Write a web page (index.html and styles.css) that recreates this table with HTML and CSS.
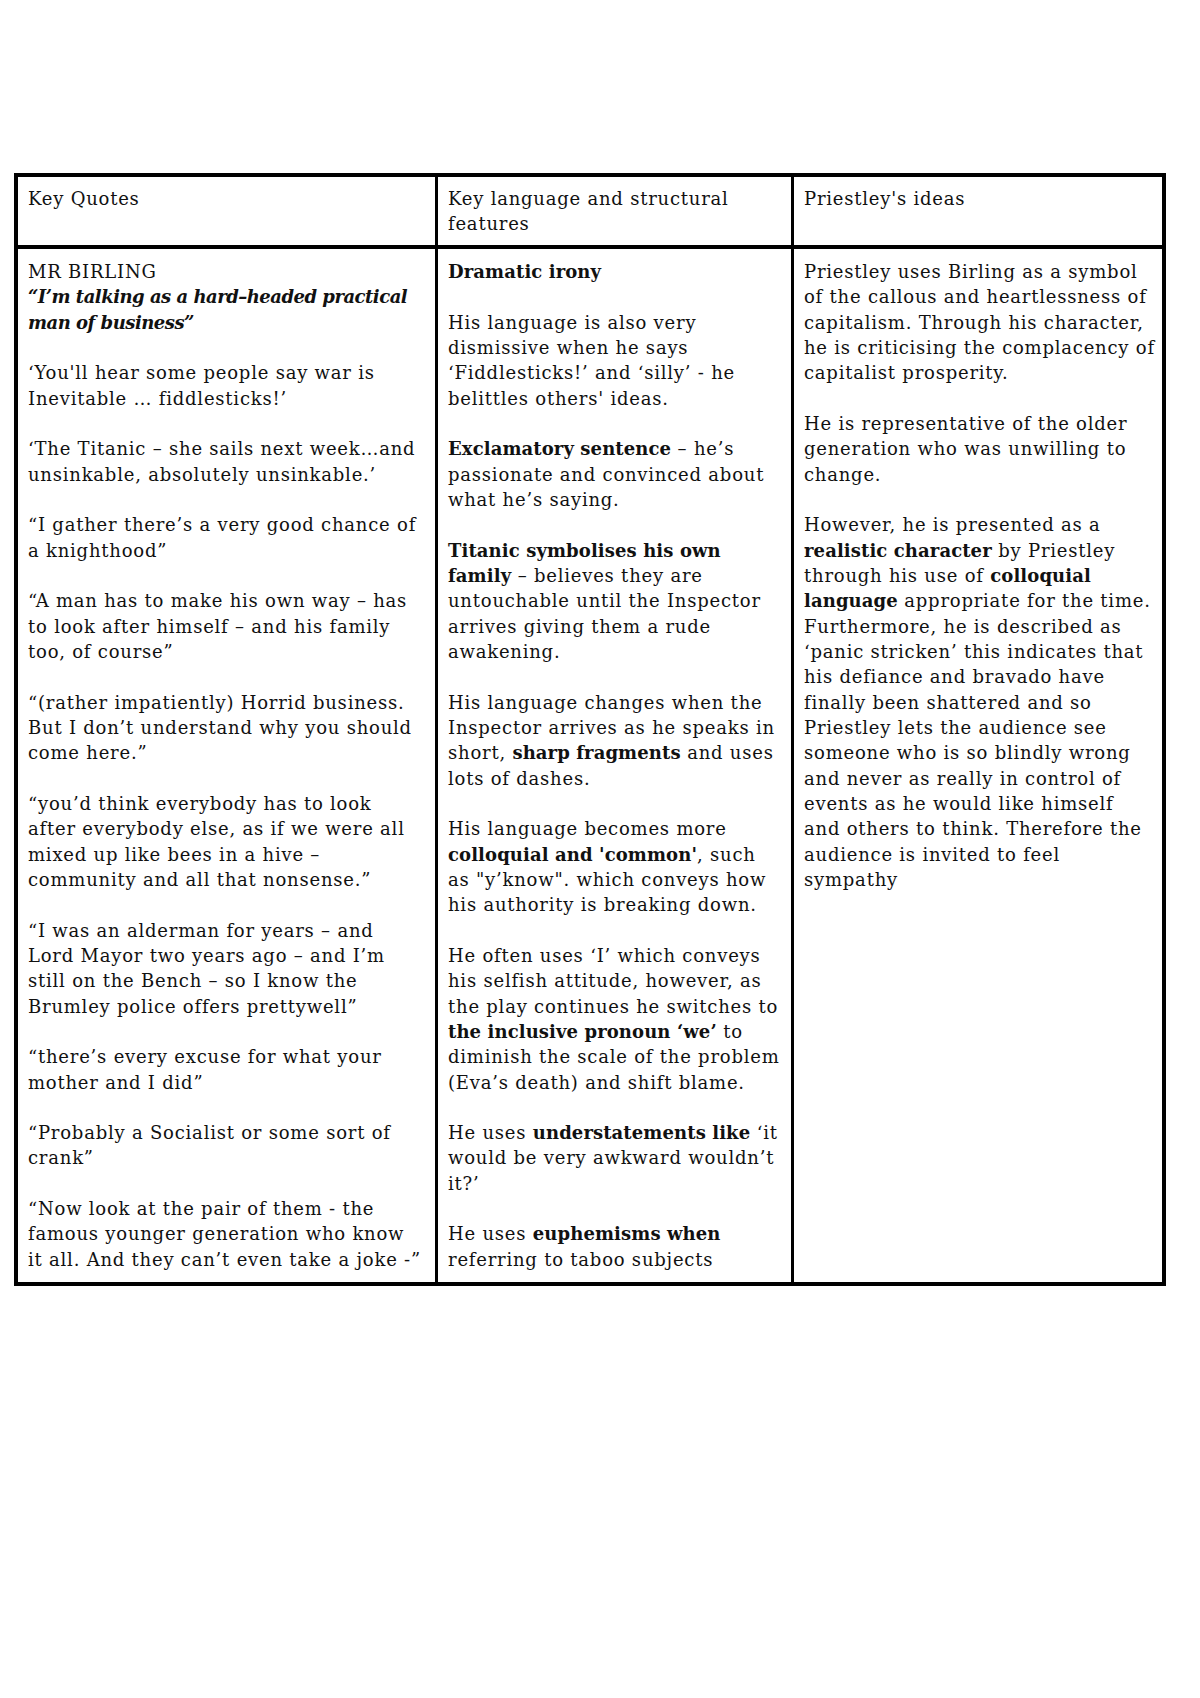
FILE: index.html
```html
<!DOCTYPE html>
<html lang="en">
<head>
<meta charset="utf-8">
<title>Mr Birling – Key Quotes</title>
<link rel="stylesheet" href="styles.css">
</head>
<body>
<table class="grid">
  <thead>
    <tr>
      <th class="c1">Key Quotes</th>
      <th class="c2">Key language and structural<br>features</th>
      <th class="c3">Priestley's ideas</th>
    </tr>
  </thead>
  <tbody>
    <tr>
      <td class="c1">
        <p>MR BIRLING<br><b class="bi"><i>“I’m talking as a hard–headed practical<br>man of business”</i></b></p>
        <p>‘You'll hear some people say war is<br>Inevitable … fiddlesticks!’</p>
        <p>‘The Titanic – she sails next week…and<br>unsinkable, absolutely unsinkable.’</p>
        <p>“I gather there’s a very good chance of<br>a knighthood”</p>
        <p>“A man has to make his own way – has<br>to look after himself – and his family<br>too, of course”</p>
        <p>“(rather impatiently) Horrid business.<br>But I don’t understand why you should<br>come here.”</p>
        <p>“you’d think everybody has to look<br>after everybody else, as if we were all<br>mixed up like bees in a hive –<br>community and all that nonsense.”</p>
        <p>“I was an alderman for years – and<br>Lord Mayor two years ago – and I’m<br>still on the Bench – so I know the<br>Brumley police offers prettywell”</p>
        <p>“there’s every excuse for what your<br>mother and I did”</p>
        <p>“Probably a Socialist or some sort of<br>crank”</p>
        <p>“Now look at the pair of them - the<br>famous younger generation who know<br>it all. And they can’t even take a joke -”</p>
      </td>
      <td class="c2">
        <p><b>Dramatic irony</b></p>
        <p>His language is also very<br>dismissive when he says<br>‘Fiddlesticks!’ and ‘silly’ - he<br>belittles others' ideas.</p>
        <p><b>Exclamatory sentence</b> – he’s<br>passionate and convinced about<br>what he’s saying.</p>
        <p><b>Titanic symbolises his own<br>family</b> – believes they are<br>untouchable until the Inspector<br>arrives giving them a rude<br>awakening.</p>
        <p>His language changes when the<br>Inspector arrives as he speaks in<br>short, <b>sharp fragments</b> and uses<br>lots of dashes.</p>
        <p>His language becomes more<br><b>colloquial and 'common'</b>, such<br>as "y’know". which conveys how<br>his authority is breaking down.</p>
        <p>He often uses ‘I’ which conveys<br>his selfish attitude, however, as<br>the play continues he switches to<br><b>the inclusive pronoun ‘we’</b> to<br>diminish the scale of the problem<br>(Eva’s death) and shift blame.</p>
        <p>He uses <b>understatements like</b> ‘it<br>would be very awkward wouldn’t<br>it?’</p>
        <p>He uses <b>euphemisms when</b><br>referring to taboo subjects</p>
      </td>
      <td class="c3">
        <p>Priestley uses Birling as a symbol<br>of the callous and heartlessness of<br>capitalism. Through his character,<br>he is criticising the complacency of<br>capitalist prosperity.</p>
        <p>He is representative of the older<br>generation who was unwilling to<br>change.</p>
        <p>However, he is presented as a<br><b>realistic character</b> by Priestley<br>through his use of <b>colloquial<br>language</b> appropriate for the time.<br>Furthermore, he is described as<br>‘panic stricken’ this indicates that<br>his defiance and bravado have<br>finally been shattered and so<br>Priestley lets the audience see<br>someone who is so blindly wrong<br>and never as really in control of<br>events as he would like himself<br>and others to think. Therefore the<br>audience is invited to feel<br>sympathy</p>
      </td>
    </tr>
  </tbody>
</table>
</body>
</html>
```

FILE: styles.css
```css
html, body {
  margin: 0;
  padding: 0;
  background: #ffffff;
}

body {
  font-family: "DejaVu Serif", "Liberation Serif", serif;
  font-size: 18px;
  line-height: 25.33px;
  letter-spacing: 0.78px;
  color: #111111;
  padding: 173px 0 0 14px;
  height: 1698px;
  box-sizing: border-box;
}

.grid {
  border-collapse: separate;
  border-spacing: 0;
  border: 4px solid #000;
  table-layout: fixed;
  width: 1152px;
}

.grid th,
.grid td {
  box-sizing: border-box;
  text-align: left;
  vertical-align: top;
  font-weight: normal;
  white-space: nowrap;
  padding: 10px 6px 0 10px;
  border-right: 3px solid #000;
}

.grid th.c3,
.grid td.c3 {
  border-right: 0;
}

.grid th {
  height: 72px;
  padding-top: 9px;
  border-bottom: 4px solid #000;
}

.grid td {
  height: 1033px;
}

.grid th.c1 { width: 420px; }
.grid th.c2 { width: 356px; }

.grid p {
  margin: 0 0 25.33px;
}

.grid p:last-child {
  margin-bottom: 0;
}

.grid b {
  font-weight: bold;
  letter-spacing: 0.1px;
}

.grid b.bi {
  letter-spacing: -0.5px;
}
```
